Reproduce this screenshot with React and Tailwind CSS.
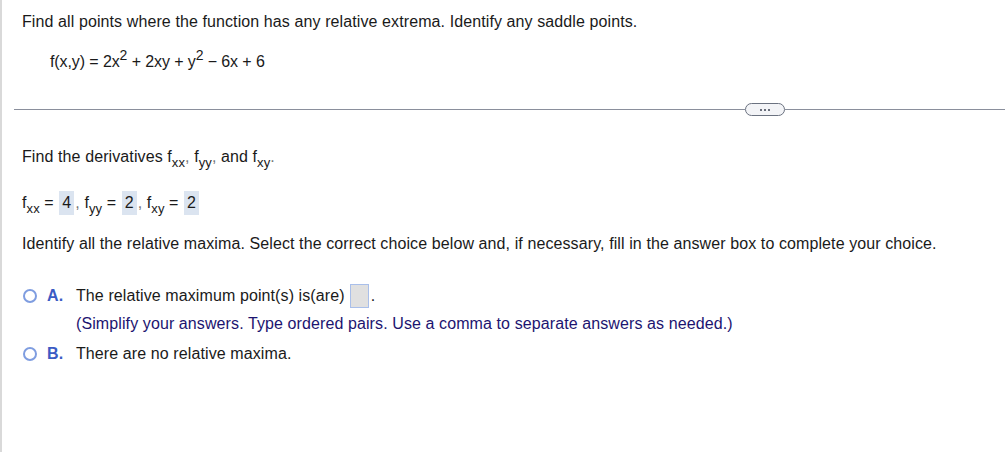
import React from 'react';

const Sub = ({ children }) => (
    <span className="inline-block text-[13px] relative top-[5px] leading-none">{children}</span>
);

const Sup = ({ children }) => (
    <span className="inline-block text-[14px] relative -top-[7px] leading-none">{children}</span>
);

const Ans = ({ children }) => (
    <span className="inline-block bg-[#dbe4f0] px-[3px] leading-[24px] mx-[1px]">{children}</span>
);

const Radio = () => (
    <span className="inline-block w-[14px] h-[14px] rounded-full border-2 border-[#7f9de0] bg-white shrink-0" />
);

export default function App() {
    return (
        <div
            className="w-[1005px] h-[452px] bg-white text-[#1a1a1a] border-l-2 border-[#d9d9d9] overflow-hidden text-[16px] tracking-[0.1px]"
            style={{ fontFamily: '"Liberation Sans", Arial, sans-serif' }}
        >
            <div className="pl-[20px] pt-[12px] leading-[20px]">
                Find all points where the function has any relative extrema. Identify any saddle points.
            </div>

            <div className="pl-[48px] mt-[20px] leading-[20px] tracking-[-0.1px]">
                f(x,y) = 2x<Sup>2</Sup> + 2xy + y<Sup>2</Sup> − 6x + 6
            </div>

            {/* divider */}
            <div className="flex items-center pl-[12px] mt-[31px] h-[13px]">
                <div className="flex-1 h-[1px] bg-[#8a8f9c]" />
                <button className="w-[40px] h-[13px] rounded-full border border-[#6b7280] bg-[#f3f4f7] flex items-center justify-center gap-[2px]">
                    <span className="w-[2px] h-[2px] bg-[#3b4252] rounded-full" />
                    <span className="w-[2px] h-[2px] bg-[#3b4252] rounded-full" />
                    <span className="w-[2px] h-[2px] bg-[#3b4252] rounded-full" />
                </button>
                <div className="w-[220px] h-[1px] bg-[#8a8f9c]" />
            </div>

            <div className="pl-[20px] mt-[31px] leading-[20px] h-[20px]">
                Find the derivatives f<Sub>xx</Sub><span className="text-[#777]">, </span>f<Sub>yy</Sub><span className="text-[#777]">, </span>and f<Sub>xy</Sub><span className="text-[#777]">.</span>
            </div>

            <div className="pl-[20px] mt-[24px] leading-[24px] h-[24px]">
                f<Sub>xx</Sub> = <Ans>4</Ans><span className="text-[#777]">, </span>f<Sub>yy</Sub> = <Ans>2</Ans><span className="text-[#777]">, </span>f<Sub>xy</Sub> = <Ans>2</Ans>
            </div>

            <div className="pl-[20px] mt-[19px] leading-[20px]">
                Identify all the relative maxima. Select the correct choice below and, if necessary, fill in the answer box to complete your choice.
            </div>

            <div className="flex flex-col pl-[21px] mt-[30px]">
                <div className="flex items-start">
                    <div className="flex items-center h-[24px]">
                        <Radio />
                        <span className="ml-[10px] w-[29px] font-bold text-[#3b5bc4]">A.</span>
                    </div>
                    <div className="flex flex-col">
                        <div className="flex items-center h-[24px]">
                            The relative maximum point(s) is(are)
                            <span className="inline-block ml-[5px] w-[19px] h-[24px] bg-[#e0e0e0] border border-[#a9bfea]" />
                            <span className="ml-[2px]">.</span>
                        </div>
                        <div className="text-[#1c1470] leading-[20px] mt-[6px]">
                            (Simplify your answers. Type ordered pairs. Use a comma to separate answers as needed.)
                        </div>
                    </div>
                </div>
                <div className="flex items-center h-[20px] mt-[10px]">
                    <Radio />
                    <span className="ml-[10px] w-[29px] font-bold text-[#3b5bc4]">B.</span>
                    <span>There are no relative maxima.</span>
                </div>
            </div>
        </div>
    );
}
